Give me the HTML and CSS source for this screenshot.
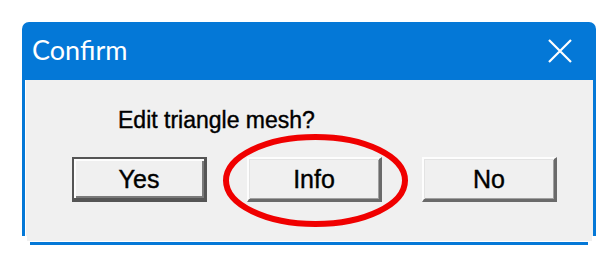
FILE: index.html
```html
<!DOCTYPE html>
<html>
<head>
<meta charset="utf-8">
<link rel="stylesheet" href="styles.css">
</head>
<body>
<div class="win">
  <div class="titlebar">
    <span class="title">Confirm</span>
    <svg class="close" width="24" height="24" viewBox="0 0 24 24"><path d="M1 1 L23 23 M23 1 L1 23" stroke="#fff" stroke-width="2.2" fill="none"/></svg>
  </div>
  <div class="client">
    <div class="msg">Edit triangle mesh?</div>
    <div class="buttons">
      <div class="btn btn-default">Yes</div>
      <div class="btn">Info</div>
      <div class="btn">No</div>
    </div>
  </div>
  <div class="foot"></div>
  <div class="footline"></div>
</div>
<svg class="ring" width="613" height="253" viewBox="0 0 613 253"><ellipse cx="315.5" cy="180.5" rx="89.5" ry="43.5" fill="none" stroke="#f00000" stroke-width="6"/></svg>
</body>
</html>
```

FILE: styles.css
```css
html, body {
  margin: 0;
  padding: 0;
  background: #ffffff;
}
body {
  position: relative;
  width: 613px;
  height: 253px;
  overflow: hidden;
}
.win {
  margin: 22px 0 0 22px;
  width: 574px;
}
.titlebar {
  height: 58px;
  background: #0478d7;
  border-radius: 7px 7px 0 0;
  display: flex;
  align-items: center;
  justify-content: space-between;
  padding: 0 24px 0 10px;
}
.title {
  font-family: Lato, "Noto Sans", sans-serif;
  font-size: 27px;
  color: #ffffff;
  line-height: 30px;
  margin-top: -2px;
}
.close {
  display: block;
  margin-top: -1px;
}
.client {
  height: 156px;
  background: #f0f0f0;
  border-left: 3px solid #0478d7;
  border-right: 3px solid #0478d7;
  box-shadow: inset 1px 0 0 #ffffff;
}
.msg {
  font-family: "Liberation Sans", Arial, sans-serif;
  font-size: 23px;
  line-height: 26px;
  color: #000;
  -webkit-text-stroke: 0.4px #000;
  padding: 27px 0 0 93px;
}
.buttons {
  display: flex;
  gap: 40px;
  margin: 24px 0 0 47px;
}
.btn {
  box-sizing: border-box;
  width: 135px;
  height: 45px;
  background: #f0f0f0;
  display: flex;
  align-items: center;
  justify-content: center;
  font-family: "Liberation Sans", Arial, sans-serif;
  font-size: 25px;
  color: #000;
  -webkit-text-stroke: 0.4px #000;
  border-style: solid;
  border-width: 2px 3px 3px 2px;
  border-color: #fdfdfd #6a6a6a #6a6a6a #fdfdfd;
  box-shadow: inset 1px 1px 0 #e3e3e3, inset -1px -1px 0 #a0a0a0;
  padding-top: 1px;
}
.btn-default {
  border-width: 2px 3px 4px 2px;
  border-color: #555555;
  box-shadow: inset 2px 2px 0 #fdfdfd, inset -2px -2px 0 #7a7a7a;
}
.foot {
  height: 5px;
  margin: 0 4px 0 5px;
  background: #f0f0f0;
  border-bottom: 1px solid #ffffff;
}
.footline {
  height: 3px;
  margin: 0 8px 0 8px;
  background: #0478d7;
}
.ring {
  position: absolute;
  left: 0;
  top: 0;
  pointer-events: none;
}
```
